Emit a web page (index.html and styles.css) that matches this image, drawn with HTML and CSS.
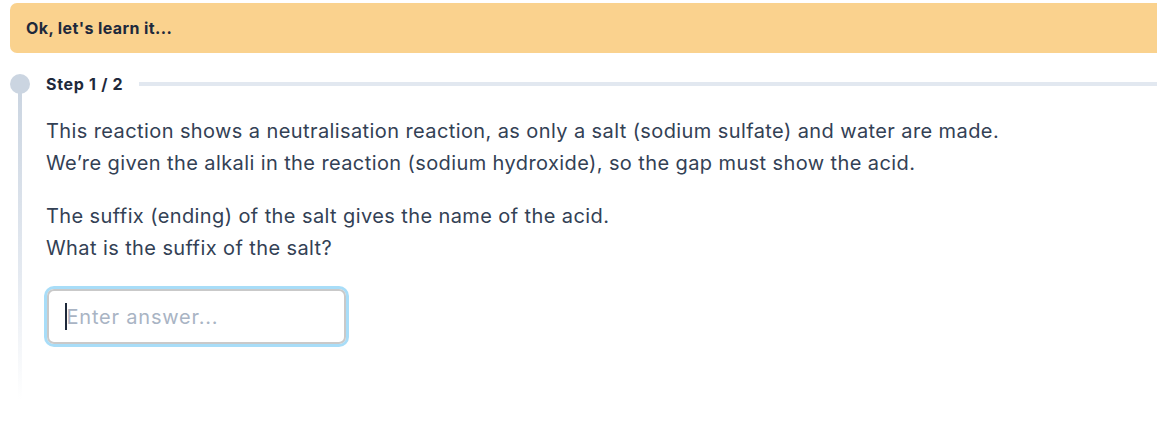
FILE: index.html
```html
<!DOCTYPE html>
<html>
<head>
<meta charset="utf-8">
<link rel="stylesheet" href="styles.css">
</head>
<body>
<div class="page">
  <div class="banner">Ok, let's learn it...</div>
  <div class="step">
    <div class="rail">
      <div class="dot"></div>
      <div class="line"></div>
    </div>
    <div class="content">
      <div class="step-head">
        <span class="step-label">Step 1 / 2</span>
        <span class="step-rule"></span>
      </div>
      <p class="para">This reaction shows a neutralisation reaction, as only a salt (sodium sulfate) and water are made.<br>We’re given the alkali in the reaction (sodium hydroxide), so the gap must show the acid.</p>
      <p class="para">The suffix (ending) of the salt gives the name of the acid.<br>What is the suffix of the salt?</p>
      <div class="answer">
        <span class="caret"></span><span class="placeholder">Enter answer...</span>
      </div>
    </div>
  </div>
</div>
</body>
</html>
```
FILE: styles.css
```css
html, body {
  margin: 0;
  padding: 0;
  background: #ffffff;
}
body {
  font-family: Inter, "DejaVu Sans", sans-serif;
  color: #334155;
  overflow: hidden;
}
.page {
  padding: 3px 0 0 10px;
}
.banner {
  background: #fad28e;
  height: 50px;
  border-radius: 7px 0 0 7px;
  box-sizing: border-box;
  padding-left: 16px;
  display: flex;
  align-items: center;
  font-size: 16px;
  font-weight: 700;
  letter-spacing: 0.4px;
  color: #1e293b;
  margin-right: -10px;
}
.step {
  display: flex;
  margin-top: 21px;
}
.rail {
  width: 20px;
  display: flex;
  flex-direction: column;
  align-items: center;
  flex: none;
}
.dot {
  width: 20px;
  height: 20px;
  border-radius: 50%;
  background: #cbd5e1;
  flex: none;
}
.line {
  width: 4px;
  height: 308px;
  margin-top: -2px;
  background: linear-gradient(#cbd5e1 0%, #e5eaf1 60%, #ffffff 100%);
}
.content {
  flex: 1;
  padding-left: 16px;
}
.step-head {
  display: flex;
  align-items: center;
  height: 20px;
  gap: 16px;
}
.step-label {
  font-size: 16px;
  font-weight: 700;
  letter-spacing: 0.7px;
  color: #1e293b;
  white-space: nowrap;
}
.step-rule {
  flex: 1;
  height: 4px;
  background: #e2e8f0;
}
.para {
  margin: 21px 0 0 0;
  font-size: 20px;
  line-height: 32px;
  letter-spacing: 0.4px;
  color: #334155;
}
.para + .para {
  margin-top: 21px;
}
.answer {
  margin-top: 25px;
  margin-left: 1px;
  width: 299px;
  height: 55px;
  box-sizing: border-box;
  border: 2px solid #c9c9c9;
  border-radius: 7px;
  box-shadow: 0 0 0 3px #a8ddf8;
  display: flex;
  align-items: center;
  padding-left: 16px;
}
.caret {
  width: 1.5px;
  height: 27px;
  background: #1e293b;
}
.placeholder {
  font-size: 20px;
  letter-spacing: 0.8px;
  color: #a9b4c4;
}
```
